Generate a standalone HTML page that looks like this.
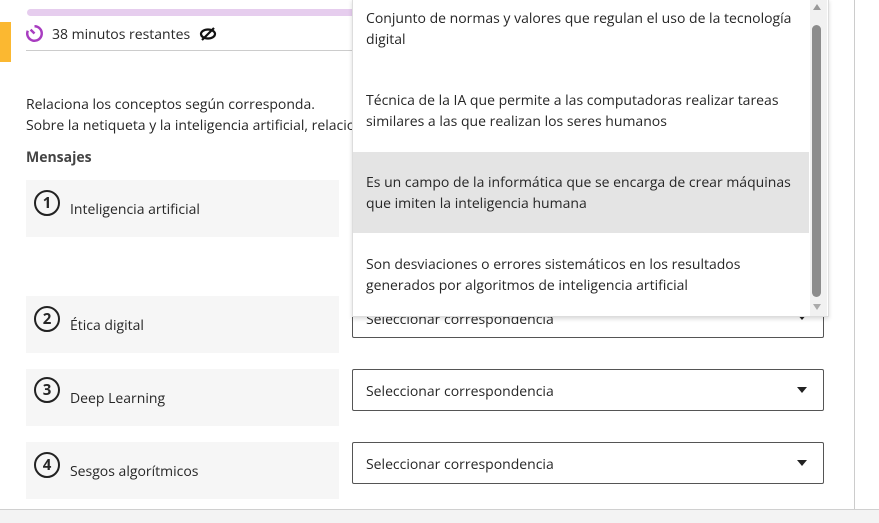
<!DOCTYPE html>
<html><head><style>
body{margin:0;width:879px;height:522px;position:relative;overflow:hidden;background:#fff;font-family:"Open Sans","Liberation Sans",sans-serif;color:#262626;font-size:14px}
.a{position:absolute}
.box{position:absolute;left:26px;width:313px;background:#f6f6f6}
.num{position:absolute;left:8px;width:22px;height:22px;border:2px solid #222;border-radius:50%;font-weight:bold;font-size:15px;text-align:center;line-height:22px}
.lbl{position:absolute;left:44px}
.sel{position:absolute;left:352px;width:470px;height:40px;border:1px solid #555;border-radius:2px;background:#fff}
.sel span{position:absolute;left:13px;top:12px}
.sel i{position:absolute;right:16px;top:17px;border-left:5px solid transparent;border-right:5px solid transparent;border-top:6px solid #222}
.opt{position:absolute;left:13px;width:440px;line-height:21px;font-size:14px}
</style></head><body>
<div class="a" style="left:0;top:22px;width:11px;height:40px;background:#fbb831"></div>
<div class="a" style="left:27px;top:9px;width:340px;height:7px;border-radius:4px;background:#e6cdee"></div>
<svg class="a" style="left:25px;top:24px" width="19" height="19" viewBox="0 0 17 17"><path d="M8.5 2A6.5 6.5 0 1 1 2.5 6" fill="none" stroke="#a83cc0" stroke-width="2.2"/><path d="M5 5l3.5 3.5" stroke="#a83cc0" stroke-width="2.2"/></svg>
<div class="a" style="left:52px;top:25px">38 minutos restantes</div>
<svg class="a" style="left:199px;top:27px" width="18" height="14" viewBox="0 0 18 14"><ellipse cx="9" cy="7" rx="7" ry="4.5" fill="none" stroke="#111" stroke-width="2.2"/><path d="M3 13L15 1" stroke="#111" stroke-width="2.2"/></svg>
<div class="a" style="left:26px;top:50px;width:330px;height:1px;background:#ccc"></div>
<div class="a" style="left:26px;top:94px;line-height:21px">Relaciona los conceptos según corresponda.<br>Sobre la netiqueta y la inteligencia artificial, relacio</div>
<div class="a" style="left:26px;top:148px;font-weight:bold;color:#444">Mensajes</div>
<div class="box" style="top:180px;height:57px"><div class="num" style="top:10px">1</div><div class="lbl" style="top:20px">Inteligencia artificial</div></div>
<div class="box" style="top:296px;height:57px"><div class="num" style="top:10px">2</div><div class="lbl" style="top:20px">Ética digital</div></div>
<div class="box" style="top:369px;height:57px"><div class="num" style="top:8px">3</div><div class="lbl" style="top:20px">Deep Learning</div></div>
<div class="box" style="top:442px;height:57px"><div class="num" style="top:10px">4</div><div class="lbl" style="top:20px">Sesgos algorítmicos</div></div>
<div class="sel" style="top:296px"><span style="top:13px">Seleccionar correspondencia</span><i></i></div>
<div class="sel" style="top:369px"><span>Seleccionar correspondencia</span><i></i></div>
<div class="sel" style="top:442px"><span>Seleccionar correspondencia</span><i></i></div>
<div class="a" style="left:352px;top:-1px;width:475px;height:316px;background:#fff;border:1px solid #ddd;box-shadow:0 2px 4px rgba(0,0,0,.15)">
<div class="opt" style="top:8px">Conjunto de normas y valores que regulan el uso de la tecnología digital</div>
<div class="opt" style="top:90px">Técnica de la IA que permite a las computadoras realizar tareas similares a las que realizan los seres humanos</div>
<div class="a" style="left:0;top:152px;width:456px;height:81px;background:#e4e4e4"></div>
<div class="opt" style="top:172px">Es un campo de la informática que se encarga de crear máquinas que imiten la inteligencia humana</div>
<div class="opt" style="top:254px">Son desviaciones o errores sistemáticos en los resultados generados por algoritmos de inteligencia artificial</div>
<div class="a" style="left:457px;top:0;width:17px;height:316px;background:#f1f1f1"></div>
<div class="a" style="left:459px;top:25px;width:9px;height:272px;border-radius:5px;background:#8c8c8c"></div>
<div class="a" style="left:460px;top:4px;border-left:4px solid transparent;border-right:4px solid transparent;border-bottom:6px solid #999"></div>
<div class="a" style="left:460px;top:304px;border-left:4px solid transparent;border-right:4px solid transparent;border-top:6px solid #aaa"></div>
</div>
<div class="a" style="left:854px;top:0;width:1px;height:509px;background:#ccc"></div>
<div class="a" style="left:0;top:509px;width:879px;height:13px;background:#f3f3f3;border-top:1px solid #d0d0d0"></div>
</body></html>
